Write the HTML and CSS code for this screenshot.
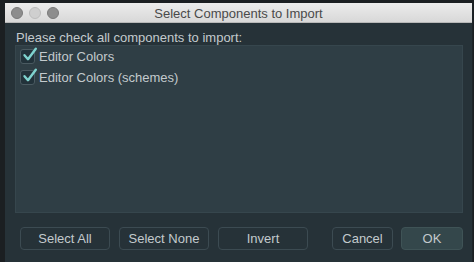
FILE: index.html
```html
<!DOCTYPE html>
<html lang="en">
<head>
  <meta charset="UTF-8">
  <title>Select Components to Import</title>
  <link rel="stylesheet" href="styles.css">
</head>
<body>
  <div class="window">
    <div class="titlebar">
      <div class="lights">
        <span class="light"></span>
        <span class="light off"></span>
        <span class="light"></span>
      </div>
      <div class="title">Select Components to Import</div>
      <div></div>
    </div>
    <div class="content">
      <p class="prompt">Please check all components to import:</p>
      <div class="list">
        <label class="item"><span class="box"><svg viewBox="0 0 16 16" width="16" height="16"><path d="M2.5 8.2 L6 12.2 L13.8 1.8" fill="none" stroke="#7fd3cf" stroke-width="2.4" stroke-linecap="round" stroke-linejoin="round"/></svg></span>Editor Colors</label>
        <label class="item"><span class="box"><svg viewBox="0 0 16 16" width="16" height="16"><path d="M2.5 8.2 L6 12.2 L13.8 1.8" fill="none" stroke="#7fd3cf" stroke-width="2.4" stroke-linecap="round" stroke-linejoin="round"/></svg></span>Editor Colors (schemes)</label>
      </div>
      <div class="buttons">
        <button class="btn wide">Select All</button>
        <button class="btn wide">Select None</button>
        <button class="btn wide">Invert</button>
        <span class="spacer"></span>
        <button class="btn">Cancel</button>
        <button class="btn ok">OK</button>
      </div>
    </div>
  </div>
</body>
</html>
```

FILE: styles.css
```css
body {
  margin: 0;
  background-color: #1b1f22;
  font-family: "Liberation Sans", Arial, sans-serif;
  font-size: 13px;
  overflow: hidden;
}
.window {
  margin: 3px 0 0 5px;
  width: 467px;
  height: 262px;
  background-color: #263238;
  border-right: 1px solid #1d2428;
}
.titlebar {
  height: 19px;
  display: grid;
  grid-template-columns: 1fr auto 1fr;
  align-items: center;
  background: linear-gradient(#ececec, #d8d8d8);
  border-bottom: 1px solid #b8b8b8;
  color: #4a4a4a;
}
.lights {
  display: flex;
  gap: 6px;
  padding-left: 6px;
}
.light {
  width: 12px;
  height: 12px;
  border-radius: 50%;
  background-color: #8d8d8d;
  border: 0.5px solid #7a7a7a;
  box-sizing: border-box;
}
.light.off {
  background-color: #cfcfcf;
  border-color: #bdbdbd;
}
.title {
  padding-top: 1px;
}
.content {
  padding: 0 9px 0 10px;
}
.prompt {
  margin: 0;
  height: 22px;
  line-height: 29px;
  padding-left: 1px;
  color: #c3cacd;
}
.list {
  height: 166px;
  background-color: #2f3e45;
  border: 1px solid #36464d;
  padding-top: 0;
}
.item {
  display: flex;
  align-items: center;
  height: 21px;
  padding-left: 4px;
  color: #c3cacd;
}
.box {
  width: 15px;
  height: 15px;
  box-sizing: border-box;
  border: 1px solid #4a5a61;
  border-radius: 3px;
  background-color: #22323a;
  margin-right: 4px;
  position: relative;
}
.box svg {
  position: absolute;
  left: 1px;
  top: -3px;
}
.buttons {
  display: flex;
  gap: 9px;
  margin-top: 14px;
  padding-left: 5px;
}
.spacer {
  flex: 1;
}
.btn {
  height: 23px;
  width: 61px;
  padding: 0;
  font-family: inherit;
  font-size: 13px;
  color: #c3cacd;
  background-color: #263238;
  border: 1px solid #3c4b52;
  border-radius: 4px;
}
.btn.wide {
  width: 90px;
}
.btn.ok {
  width: 62px;
  margin-left: -1px;
  background-color: #34474b;
  border-color: #3f5356;
}
```
